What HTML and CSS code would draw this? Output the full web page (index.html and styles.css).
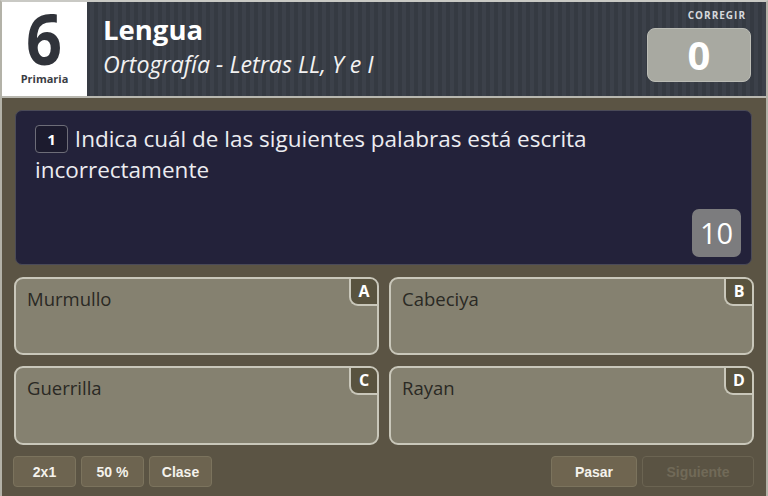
FILE: index.html
```html
<!DOCTYPE html>
<html lang="es">
<head>
<meta charset="utf-8">
<title>Lengua - Ortografía</title>
<link rel="stylesheet" href="styles.css">
</head>
<body>
<div class="app">
  <header class="header">
    <div class="grade">
      <div class="grade-num">6</div>
      <div class="grade-label">Primaria</div>
    </div>
    <div class="title">
      <div class="subject">Lengua</div>
      <div class="topic">Ortografía - Letras LL, Y e I</div>
    </div>
    <div class="score">
      <div class="score-label">CORREGIR</div>
      <div class="score-box">0</div>
    </div>
  </header>
  <main class="main">
    <section class="question">
      <p class="q-text"><span class="q-num">1</span> Indica cuál de las siguientes palabras está escrita incorrectamente</p>
      <div class="timer">10</div>
    </section>
    <section class="answers">
      <div class="answer"><span class="a-text">Murmullo</span><span class="a-letter">A</span></div>
      <div class="answer"><span class="a-text">Cabeciya</span><span class="a-letter">B</span></div>
      <div class="answer"><span class="a-text">Guerrilla</span><span class="a-letter">C</span></div>
      <div class="answer"><span class="a-text">Rayan</span><span class="a-letter">D</span></div>
    </section>
    <footer class="controls">
      <div class="left-btns">
        <button class="btn btn-sm">2x1</button>
        <button class="btn btn-sm">50 %</button>
        <button class="btn btn-sm">Clase</button>
      </div>
      <div class="right-btns">
        <button class="btn btn-pass">Pasar</button>
        <button class="btn btn-next" disabled>Siguiente</button>
      </div>
    </footer>
  </main>
</div>
</body>
</html>
```
FILE: styles.css
```css
* { box-sizing: border-box; }
html, body { margin: 0; padding: 0; }
body {
  width: 768px;
  height: 496px;
  overflow: hidden;
  background: #5b5444;
  font-family: "Open Sans", "Noto Sans", sans-serif;
}
.app {
  width: 768px;
  height: 496px;
  border-left: 2px solid #b3b2a8;
  border-right: 2px solid #b3b2a8;
  border-top: 2px solid #c9c9c4;
  background: #5b5444;
}
.header {
  display: flex;
  height: 96px;
  border-bottom: 2px solid #b9b8b0;
  background: repeating-linear-gradient(90deg, #3c414a 0 4px, #353a42 4px 8px);
}
.grade {
  width: 85px;
  background: #ffffff;
  display: flex;
  flex-direction: column;
  align-items: center;
  padding-top: 3px;
}
.grade-num {
  font-size: 70px;
  font-weight: 700;
  line-height: 66px;
  color: #30333a;
  transform: scaleX(0.9);
}
.grade-label {
  font-size: 11px;
  font-weight: 700;
  color: #3a3d44;
  line-height: 14px;
  margin-top: 1px;
}
.title {
  flex: 1;
  padding: 10px 0 0 16px;
  color: #ffffff;
}
.subject {
  font-size: 27.5px;
  font-weight: 700;
  line-height: 36px;
}
.topic {
  font-size: 23.2px;
  font-style: italic;
  line-height: 30px;
  margin-top: 1px;
  color: #f2f2f2;
}
.score {
  display: flex;
  flex-direction: column;
  align-items: flex-end;
  padding: 6px 15px 0 0;
}
.score-label {
  font-size: 10px;
  font-weight: 700;
  letter-spacing: 1px;
  color: #d6d8dc;
  margin-right: 5px;
  line-height: 14px;
}
.score-box {
  margin-top: 6px;
  width: 104px;
  height: 54px;
  background: #a8a9a1;
  border: 1px solid #bcbdb6;
  border-radius: 8px;
  color: #ffffff;
  font-size: 40px;
  font-weight: 700;
  text-align: center;
  line-height: 52px;
}
.main {
  padding: 12px 12px 0 11px;
}
.question {
  position: relative;
  margin: 0 2px 0 2px;
  height: 155px;
  background: #23223a;
  border: 1px solid #4a4a58;
  border-radius: 7px;
  padding: 12px 19px;
}
.q-text {
  margin: 0;
  max-width: 640px;
  color: #ececf0;
  font-size: 22.5px;
  line-height: 31px;
}
.q-num {
  display: inline-block;
  width: 33px;
  height: 28px;
  border: 1px solid #6d6d78;
  border-radius: 4px;
  background: #1c1b2e;
  color: #ffffff;
  font-size: 15px;
  font-weight: 700;
  text-align: center;
  line-height: 26px;
  vertical-align: 2px;
  margin-right: 1px;
}
.timer {
  position: absolute;
  right: 10px;
  bottom: 7px;
  width: 49px;
  height: 48px;
  background: #7c7c7e;
  border-radius: 7px;
  color: #ffffff;
  font-size: 29px;
  line-height: 48px;
  text-align: center;
}
.answers {
  margin-top: 12px;
  display: grid;
  grid-template-columns: 365px 365px;
  grid-template-rows: 78px 79px;
  column-gap: 10px;
  row-gap: 11px;
  margin-left: 1px;
}
.answer {
  position: relative;
  background: #858170;
  border: 2px solid #c9c7ba;
  border-radius: 9px;
  padding: 7px 11px;
  overflow: hidden;
}
.a-text {
  color: #2a2924;
  font-size: 18.5px;
  line-height: 26px;
}
.a-letter {
  position: absolute;
  top: 0;
  right: 0;
  width: 28px;
  height: 27px;
  background: #59533f;
  border-left: 2px solid #c9c7ba;
  border-bottom: 2px solid #c9c7ba;
  border-bottom-left-radius: 9px;
  color: #ffffff;
  font-size: 16px;
  font-weight: 700;
  text-align: center;
  line-height: 24px;
}
.controls {
  margin-top: 11px;
  display: flex;
  justify-content: space-between;
}
.left-btns, .right-btns {
  display: flex;
  gap: 5px;
}
.btn {
  height: 31px;
  border: 1px solid #7b735d;
  border-radius: 4px;
  background: #6d6450;
  color: #f4f2ec;
  font-family: "Liberation Sans", Arial, sans-serif;
  font-weight: 700;
  font-size: 14px;
  padding: 0;
}
.btn-sm { width: 63px; }
.btn-pass { width: 86px; background: #6f6550; }
.btn-next {
  width: 112px;
  background: #5a5343;
  border-color: #6b6452;
  color: #716a58;
}
```
